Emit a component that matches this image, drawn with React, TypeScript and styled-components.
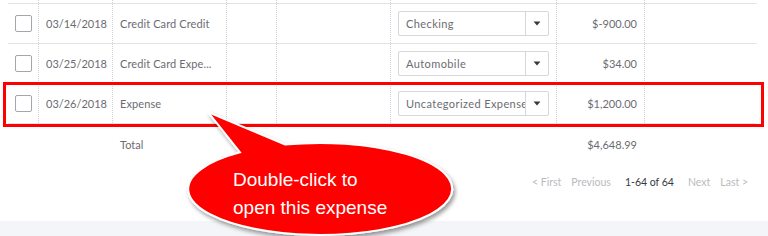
import React from "react"
import styled, { createGlobalStyle } from "styled-components"

const COLS = "30px 74px 114px 50px 114px 166px 88px 113px"

const GlobalStyle = createGlobalStyle`
  html, body {
    margin: 0;
    padding: 0;
    background: #fff;
  }
  body {
    font-family: Lato, "Open Sans", sans-serif;
  }
`

interface Txn {
  date: string
  type: string
  account: string
  amount: string
}

const rows: Txn[] = [
  { date: "03/14/2018", type: "Credit Card Credit", account: "Checking", amount: "$-900.00" },
  { date: "03/25/2018", type: "Credit Card Expe...", account: "Automobile", amount: "$34.00" },
  { date: "03/26/2018", type: "Expense", account: "Uncategorized Expense", amount: "$1,200.00" },
]

const Select = ({ value }: { value: string }) => (
  <SelectBox>
    <SelectValue>{value}</SelectValue>
    <SelectArrow>
      <svg width="8" height="5" viewBox="0 0 8 5">
        <path d="M0.5 0.5 H7.5 L4 4.5 Z" fill="#393a3d" />
      </svg>
    </SelectArrow>
  </SelectBox>
)

const Callout = () => (
  <>
    <CalloutShape width="768" height="236" viewBox="0 0 768 236">
      <defs>
        <filter id="shadow" x="-10%" y="-20%" width="130%" height="150%">
          <feDropShadow dx="2" dy="3" stdDeviation="2" floodColor="#000" floodOpacity="0.4" />
        </filter>
      </defs>
      <path
        d="M240 152.4 L208 112 L285 144.6 A132 46 0 1 1 240 152.4 Z"
        fill="#ff0000"
        stroke="#fff"
        strokeWidth="2"
        filter="url(#shadow)"
      />
    </CalloutShape>
    <CalloutText>
      Double-click to
      <br />
      open this expense
    </CalloutText>
  </>
)

export default function App() {
  return (
    <Page>
      <GlobalStyle />
      <Table>
        <Row $height={3} $noBorder>
          <Cell $first />
          <Cell />
          <Cell />
          <Cell />
          <Cell />
          <Cell />
          <Cell />
          <Cell />
        </Row>
        {rows.map((r) => (
          <Row key={r.date} $height={40}>
            <Cell $first $center>
              <Checkbox />
            </Cell>
            <Cell>{r.date}</Cell>
            <Cell $wide>{r.type}</Cell>
            <Cell />
            <Cell />
            <Cell>
              <Select value={r.account} />
            </Cell>
            <Cell $right>{r.amount}</Cell>
            <Cell />
          </Row>
        ))}
      </Table>
      <TotalRow>
        <span />
        <span />
        <TotalLabel>Total</TotalLabel>
        <span />
        <span />
        <span />
        <TotalAmount>$4,648.99</TotalAmount>
        <span />
      </TotalRow>
      <Pager>
        <PageLink>&lt; First</PageLink>
        <PageLink>Previous</PageLink>
        <PageCount>1-64 of 64</PageCount>
        <PageLink>Next</PageLink>
        <PageLink>Last &gt;</PageLink>
      </Pager>
      <Footer />
      <Highlight />
      <Callout />
    </Page>
  )
}

// Styled Components
const Page = styled.div`
  position: relative;
  width: 768px;
  height: 236px;
  overflow: hidden;
  display: flex;
  flex-direction: column;
  background: #fff;
  color: #6b6c72;
  font-size: 11px;
`

const Table = styled.div`
  width: 749px;
  margin-left: 8px;
  border-bottom: 1px solid #e3e4e7;
`

const Row = styled.div<{ $height: number; $noBorder?: boolean }>`
  display: grid;
  grid-template-columns: ${COLS};
  height: ${({ $height }) => $height}px;
  box-sizing: border-box;
  border-top: ${({ $noBorder }) => ($noBorder ? "none" : "1px solid #e3e4e7")};
`

const Cell = styled.div<{ $first?: boolean; $right?: boolean; $center?: boolean; $wide?: boolean }>`
  display: flex;
  align-items: center;
  justify-content: ${({ $right, $center }) =>
    $center ? "center" : $right ? "flex-end" : "flex-start"};
  padding: ${({ $first }) => ($first ? "0" : "0 7px 0 7px")};
  border-left: ${({ $first }) => ($first ? "none" : "1px dotted #cfd1d5")};
  letter-spacing: ${({ $wide }) => ($wide ? "0.1px" : "0")};
  white-space: nowrap;
  overflow: hidden;
  min-width: 0;
`

const Checkbox = styled.span`
  display: block;
  width: 17px;
  height: 17px;
  box-sizing: border-box;
  border: 1px solid #a3a6ab;
  border-radius: 2px;
  background: #fff;
  margin-left: 1px;
`

const SelectBox = styled.div`
  display: flex;
  width: 151px;
  height: 25px;
  box-sizing: border-box;
  border: 1px solid #d4d7dc;
  border-radius: 2px;
  background: #fff;
`

const SelectValue = styled.div`
  flex: 1;
  min-width: 0;
  overflow: hidden;
  white-space: nowrap;
  display: flex;
  align-items: center;
  padding-left: 7px;
  letter-spacing: 0.4px;
  color: #6b6c72;
`

const SelectArrow = styled.div`
  width: 22px;
  border-left: 1px solid #d4d7dc;
  display: flex;
  align-items: center;
  justify-content: center;
`

const TotalRow = styled.div`
  display: grid;
  grid-template-columns: ${COLS};
  margin-left: 8px;
  height: 40px;
  align-items: center;
`

const TotalLabel = styled.span`
  padding-left: 8px;
`

const TotalAmount = styled.span`
  text-align: right;
  padding-right: 7px;
`

const Pager = styled.div`
  display: flex;
  justify-content: flex-end;
  align-items: center;
  gap: 10px;
  height: 36px;
  padding-right: 20px;
  font-size: 10.5px;
`

const PageLink = styled.span`
  color: #b9babe;
`

const PageCount = styled.span`
  margin: 0 4px;
  color: #393a3d;
`

const Footer = styled.div`
  margin-top: auto;
  height: 15px;
  background: #f4f5f8;
`

const Highlight = styled.div`
  position: absolute;
  left: 3px;
  top: 82px;
  width: 761px;
  height: 45px;
  box-sizing: border-box;
  border: 3px solid #ff0000;
`

const CalloutShape = styled.svg`
  position: absolute;
  left: 0;
  top: 0;
  pointer-events: none;
`

const CalloutText = styled.div`
  position: absolute;
  left: 233px;
  top: 166px;
  font-family: "Liberation Sans", Arial, sans-serif;
  font-size: 19px;
  line-height: 28px;
  color: #fff;
  white-space: nowrap;
`
